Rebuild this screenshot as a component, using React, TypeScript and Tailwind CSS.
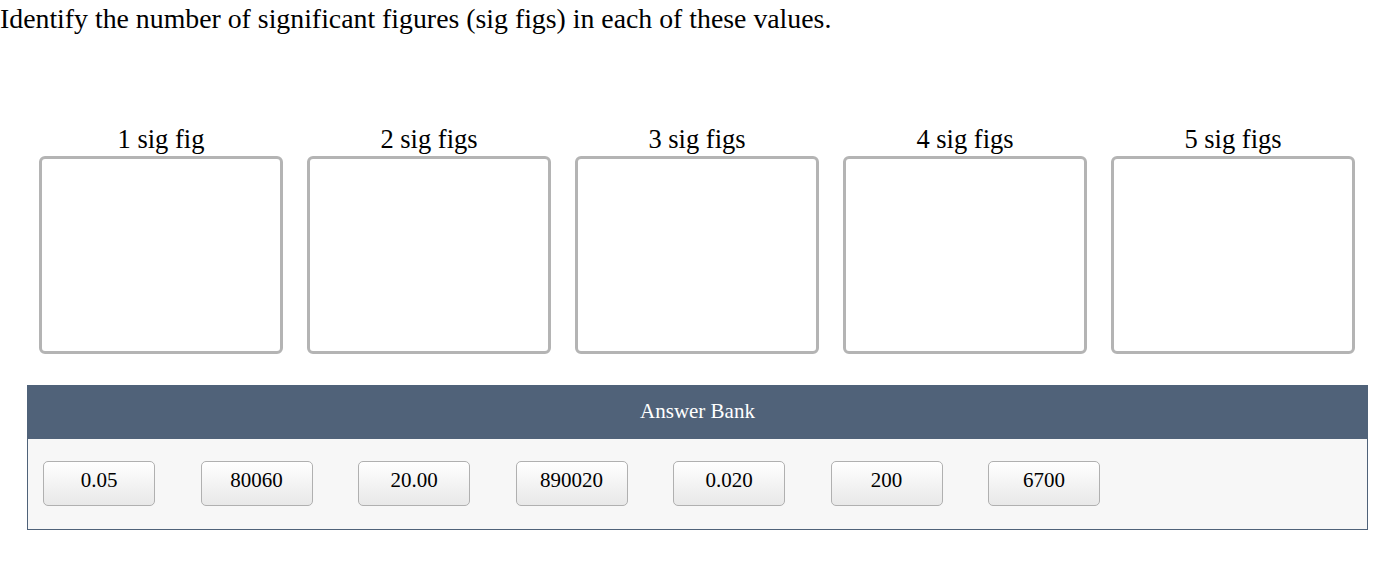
import React from "react";

const bins = ["1 sig fig", "2 sig figs", "3 sig figs", "4 sig figs", "5 sig figs"];
const answers = ["0.05", "80060", "20.00", "890020", "0.020", "200", "6700"];

export default function App() {
  return (
    <div
      className="w-[1385px] h-[588px] bg-white text-black overflow-hidden"
      style={{ fontFamily: '"Liberation Serif", "Times New Roman", serif' }}
    >
      <p className="pl-0 pt-[4px] text-[27.8px] leading-[30px] whitespace-nowrap">
        Identify the number of significant figures (sig figs) in each of these values.
      </p>

      <div className="mt-[90px] pl-[39px] flex gap-[24px]">
        {bins.map((b) => (
          <div key={b} className="w-[244px] flex flex-col items-center">
            <div className="text-[26.5px] leading-[30px] h-[30px]">{b}</div>
            <div className="mt-[2px] w-[244px] h-[198px] border-[3px] border-[#b4b4b4] rounded-[6px] bg-white" />
          </div>
        ))}
      </div>

      <div className="mt-[31px] ml-[27px] w-[1341px] border border-[#4f6279]">
        <div className="h-[53px] bg-[#506279] flex items-center justify-center text-white text-[21px] pb-[1px]">
          Answer Bank
        </div>
        <div className="bg-[#f7f7f7] pl-[15px] pt-[22px] pb-[23px] flex gap-[45.5px]">
          {answers.map((a) => (
            <div
              key={a}
              className="w-[112px] h-[45px] rounded-[5px] border border-[#b0b0b0] bg-gradient-to-b from-white to-[#e8e8e8] flex items-center justify-center text-[21px] leading-none pb-[6px]"
            >
              {a}
            </div>
          ))}
        </div>
      </div>
    </div>
  );
}
